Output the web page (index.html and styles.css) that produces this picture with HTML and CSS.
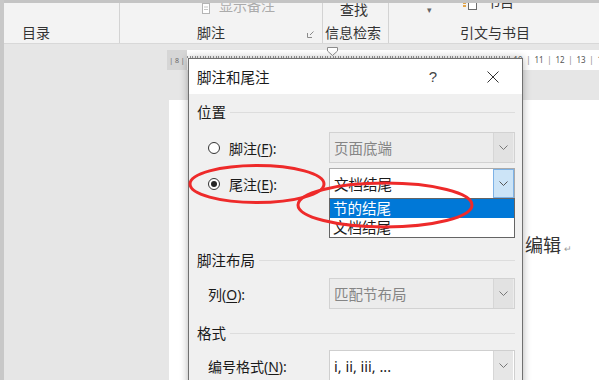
FILE: index.html
```html
<!DOCTYPE html>
<html lang="zh-CN">
<head>
    <meta charset="UTF-8">
    <title>脚注和尾注</title>
    <link rel="stylesheet" href="styles.css">
</head>
<body>

    <!-- Ribbon -->
    <div class="ribbon">
        <div class="group group-toc">
            <div class="group-top"></div>
            <div class="group-label">目录</div>
        </div>
        <div class="group group-notes">
            <div class="group-top">
                <svg class="mini-doc" width="8" height="11" viewBox="0 0 8 11"><rect x="0.5" y="0.5" width="7" height="10" fill="#fff" stroke="#b5b5b5"/><line x1="2" y1="4" x2="6" y2="4" stroke="#c5c5c5"/><line x1="2" y1="6.5" x2="6" y2="6.5" stroke="#c5c5c5"/></svg>
                <span class="muted">显示备注</span>
            </div>
            <div class="group-label">脚注</div>
            <svg class="launcher" width="7" height="7" viewBox="0 0 7 7"><polyline points="0.5,2 0.5,6.5 5,6.5" fill="none" stroke="#8a8a8a"/><line x1="3" y1="4" x2="6.5" y2="0.5" stroke="#8a8a8a"/></svg>
        </div>
        <div class="group group-research">
            <div class="group-top"><span class="find">查找</span></div>
            <div class="group-label">信息检索</div>
        </div>
        <div class="group group-cite">
            <div class="group-top">
                <span class="caret">▾</span>
                <svg class="bib-icon" width="16" height="8" viewBox="0 0 16 8"><rect x="0" y="0" width="3" height="2" fill="#e2a54a"/><rect x="0" y="3" width="3" height="2" fill="#e2a54a"/><rect x="5.5" y="-2" width="8" height="9.5" fill="#fff" stroke="#6b6b6b"/></svg>
                <span class="bib-text">书目</span>
            </div>
            <div class="group-label">引文与书目</div>
        </div>
    </div>

    <!-- Document area -->
    <div class="workspace">
        <div class="ruler">
            <div class="ruler-margin">|&nbsp;8&nbsp;|</div>
            <div class="ruler-text">
                <div class="ruler-scale">
                    <span class="num">10</span><span class="bar">|</span>
                    <span class="num">11</span><span class="bar">|</span>
                    <span class="num">12</span><span class="bar">|</span>
                    <span class="num">13</span><span class="bar">|</span>
                    <span class="num">14</span>
                </div>
            </div>
            <svg class="indent-marker" width="11" height="9" viewBox="0 0 11 9"><polygon points="0.5,0.5 10.5,0.5 10.5,4 5.5,8.5 0.5,4" fill="#fff" stroke="#8c8c8c"/></svg>
        </div>
        <div class="page">
            <p class="page-text">编辑<span class="ret">↵</span></p>
        </div>
    </div>

    <!-- Footnote dialog -->
    <div class="dialog">
        <div class="dialog-title">
            <span>脚注和尾注</span>
            <span class="help">?</span>
            <svg class="close" width="12" height="12" viewBox="0 0 12 12"><line x1="0.5" y1="0.5" x2="11.5" y2="11.5" stroke="#333"/><line x1="11.5" y1="0.5" x2="0.5" y2="11.5" stroke="#333"/></svg>
        </div>
        <div class="dialog-body">
            <div class="section-head"><span>位置</span><i class="rule"></i></div>

            <div class="row row-first">
                <label class="radio"><span class="dot"></span><span>脚注(<u>F</u>):</span></label>
                <div class="select disabled">
                    <span class="value">页面底端</span>
                    <span class="arrow"><svg width="9" height="5" viewBox="0 0 9 5"><polyline points="0.5,0.5 4.5,4.5 8.5,0.5" fill="none" stroke="#777"/></svg></span>
                </div>
            </div>

            <div class="row">
                <label class="radio"><span class="dot checked"></span><span>尾注(<u>E</u>):</span></label>
                <div class="select open">
                    <span class="value">文档结尾</span>
                    <span class="arrow"><svg width="9" height="5" viewBox="0 0 9 5"><polyline points="0.5,0.5 4.5,4.5 8.5,0.5" fill="none" stroke="#555"/></svg></span>
                    <div class="dropdown-list">
                        <div class="option selected">节的结尾</div>
                        <div class="option">文档结尾</div>
                    </div>
                </div>
            </div>

            <div class="section-head section-layout"><span>脚注布局</span><i class="rule"></i></div>

            <div class="row row-cols">
                <label class="plain">列(<u>O</u>):</label>
                <div class="select disabled">
                    <span class="value">匹配节布局</span>
                    <span class="arrow"><svg width="9" height="5" viewBox="0 0 9 5"><polyline points="0.5,0.5 4.5,4.5 8.5,0.5" fill="none" stroke="#777"/></svg></span>
                </div>
            </div>

            <div class="section-head section-format"><span>格式</span><i class="rule"></i></div>

            <div class="row row-format">
                <label class="plain">编号格式(<u>N</u>):</label>
                <div class="select">
                    <span class="value">i, ii, iii, ...</span>
                    <span class="arrow grey"><svg width="9" height="5" viewBox="0 0 9 5"><polyline points="0.5,0.5 4.5,4.5 8.5,0.5" fill="none" stroke="#777"/></svg></span>
                </div>
            </div>
        </div>
    </div>

    <!-- Red hand-drawn marks -->
    <svg class="marks" width="599" height="380" viewBox="0 0 599 380">
        <ellipse cx="257" cy="184" rx="67" ry="18.5" fill="none" stroke="#ee2a2a" stroke-width="3"/>
        <ellipse cx="385" cy="205" rx="87" ry="22" fill="none" stroke="#ee2a2a" stroke-width="3"/>
    </svg>

</body>
</html>
```

FILE: styles.css
```css
body {
    margin: 0;
    width: 599px;
    height: 380px;
    box-sizing: border-box;
    border-left: 4px solid #c8c8c8;
    background-color: #e6e6e6;
    font-family: "Noto Sans", "Noto Sans CJK SC", sans-serif;
    color: #262626;
    overflow: hidden;
    position: relative; /* for the dialog and the marks */
    display: flex;
    flex-direction: column;
}

/* Ribbon */
.ribbon {
    display: flex;
    height: 40px;
    flex-shrink: 0;
    background-color: #f3f3f3;
    border-top: 3px solid #c4c4c4;
    border-bottom: 1px solid #d8d8d8;
    overflow: hidden;
    font-size: 14px;
    color: #333;
}

.group {
    position: relative;
    display: flex;
    flex-direction: column;
    border-right: 1px solid #d3d3d3;
}

.group-top {
    height: 22px;
    display: flex;
    align-items: flex-start;
}

.group-label {
    line-height: 18px;
    white-space: nowrap;
    margin-top: -1px;
}

.group-toc {
    width: 115px;
}

.group-toc .group-label {
    padding-left: 18px;
}

.group-notes {
    width: 202px;
}

.group-notes .group-top {
    padding-left: 82px;
}

.group-notes .group-label {
    padding-left: 77px;
}

.muted {
    color: #ababab;
    line-height: 16px;
    margin-top: -5px;
    margin-left: 9px;
}

.launcher {
    position: absolute;
    right: 8px;
    bottom: 5px;
}

.group-research {
    width: 65px;
}

.group-research .group-top {
    padding-left: 17px;
}

.group-research .group-label {
    padding-left: 2px;
}

.find {
    line-height: 16px;
    margin-top: -1px;
}

.group-cite {
    flex: 1;
    border-right: none;
}

.group-cite .group-top {
    padding-left: 38px;
}

.group-cite .group-label {
    padding-left: 71px;
}

.caret {
    font-size: 9px;
    color: #666;
    line-height: 10px;
    margin-top: 2px;
}

.bib-icon {
    margin-left: 31px;
    margin-top: -1px;
}

.bib-text {
    line-height: 16px;
    margin-top: -9px;
    margin-left: 7px;
}

/* Workspace and ruler */
.workspace {
    flex: 1;
    display: flex;
    flex-direction: column;
}

.ruler {
    position: relative;
    display: flex;
    height: 20px;
    margin: 6px 0 0 163px;
}

.ruler-margin {
    width: 20px;
    background-color: #d6d6d6;
    font-size: 7px;
    color: #666;
    display: flex;
    align-items: center;
    justify-content: center;
    white-space: nowrap;
}

.ruler-text {
    flex: 1;
    display: flex;
    align-items: center;
    background-color: #fff;
    background-image: repeating-linear-gradient(90deg, #9a9a9a 0 1px, transparent 1px 2.6px);
    background-size: 100% 2px;
    background-position: 0 6px;
    background-repeat: no-repeat;
}

.ruler-scale {
    display: flex;
    margin-left: auto;
    margin-right: -9px;
    font-size: 8px;
    color: #555;
    background-color: #fff;
    line-height: 10px;
}

.ruler-scale .num {
    width: 12px;
    text-align: center;
}

.ruler-scale .bar {
    width: 9px;
    text-align: center;
    color: #888;
}

.indent-marker {
    position: absolute;
    left: 160px;
    top: -3px;
}

.page {
    flex: 1;
    margin: 30px 0 0 165px;
    background-color: #fff;
}

.page-text {
    margin: 0;
    padding: 134px 0 0 356px;
    font-size: 18px;
    line-height: 22px;
    color: #333;
}

.ret {
    font-size: 9px;
    color: #999;
    margin-left: 3px;
}

/* Dialog */
.dialog {
    position: absolute;
    left: 184px;
    top: 58px;
    width: 333px;
    height: 340px;
    background-color: #f0f0f0;
    border: 1px solid #707070;
    box-shadow: 0 0 8px rgba(0, 0, 0, 0.3);
    font-size: 14.5px;
    color: #1a1a1a;
}

.dialog-title {
    height: 35px;
    background-color: #fff;
    display: flex;
    align-items: center;
    padding-left: 8px;
}

.help {
    margin-left: auto;
    font-size: 15px;
    color: #444;
    font-family: "Liberation Sans", sans-serif;
}

.close {
    margin: 1px 23px 0 50px;
}

.dialog-body {
    padding: 8px 7px 0 8px;
}

.section-head {
    display: flex;
    align-items: center;
    gap: 4px;
    line-height: 20px;
}

.section-head .rule {
    flex: 1;
    height: 1px;
    background-color: #dddddd;
}

.section-layout {
    margin-top: 51px;
}

.section-format {
    margin-top: 14px;
}

.row {
    display: grid;
    grid-template-columns: 121px 186px;
    align-items: center;
    padding-left: 11px;
    margin-top: 5px;
    font-size: 14px;
}

.row-first {
    margin-top: 10px;
}

.row-cols {
    margin-top: 8px;
}

.row-format {
    margin-top: 7px;
}

.radio {
    display: flex;
    align-items: center;
    gap: 9px;
}

.dot {
    width: 12px;
    height: 12px;
    box-sizing: border-box;
    border: 1px solid #333;
    border-radius: 50%;
    background-color: #fff;
    display: flex;
    align-items: center;
    justify-content: center;
}

.dot.checked::after {
    content: '';
    width: 6px;
    height: 6px;
    border-radius: 50%;
    background-color: #262626;
}

.plain {
    display: block;
}

u {
    text-underline-offset: 2px;
}

/* Combo boxes */
.select {
    position: relative;
    height: 31px;
    box-sizing: border-box;
    border: 1px solid #cfcfcf;
    background-color: #fff;
    display: flex;
    align-items: center;
    font-size: 14.5px;
}

.select .value {
    flex: 1;
    padding-left: 4px;
}

.select .arrow {
    width: 19px;
    align-self: stretch;
    margin: 0 1px 0 0;
    display: flex;
    align-items: center;
    justify-content: center;
    border-left: 1px solid #d6d6d6;
}

.select .arrow.grey {
    background-color: #e6e6e6;
}

.select.disabled {
    background-color: #ececec;
    border-color: #d2d2d2;
    color: #858585;
}

.select.disabled .arrow {
    background-color: #e2e2e2;
}

.select.open {
    border-color: #ababab;
}

.select.open .arrow {
    background-color: #cce4f7;
    border: 1px solid #7db2e6;
    margin: 0;
}

.dropdown-list {
    position: absolute;
    left: -1px;
    top: 29px;
    width: 186px;
    box-sizing: border-box;
    border: 1px solid #646464;
    background-color: #fff;
    color: #1a1a1a;
    z-index: 2;
}

.option {
    height: 19px;
    line-height: 19px;
    padding-left: 3px;
}

.option.selected {
    background-color: #0078d7;
    color: #fff;
}

/* Red marks drawn over the screenshot */
.marks {
    position: absolute;
    left: -4px;
    top: 0;
    pointer-events: none;
    z-index: 5;
}
```
